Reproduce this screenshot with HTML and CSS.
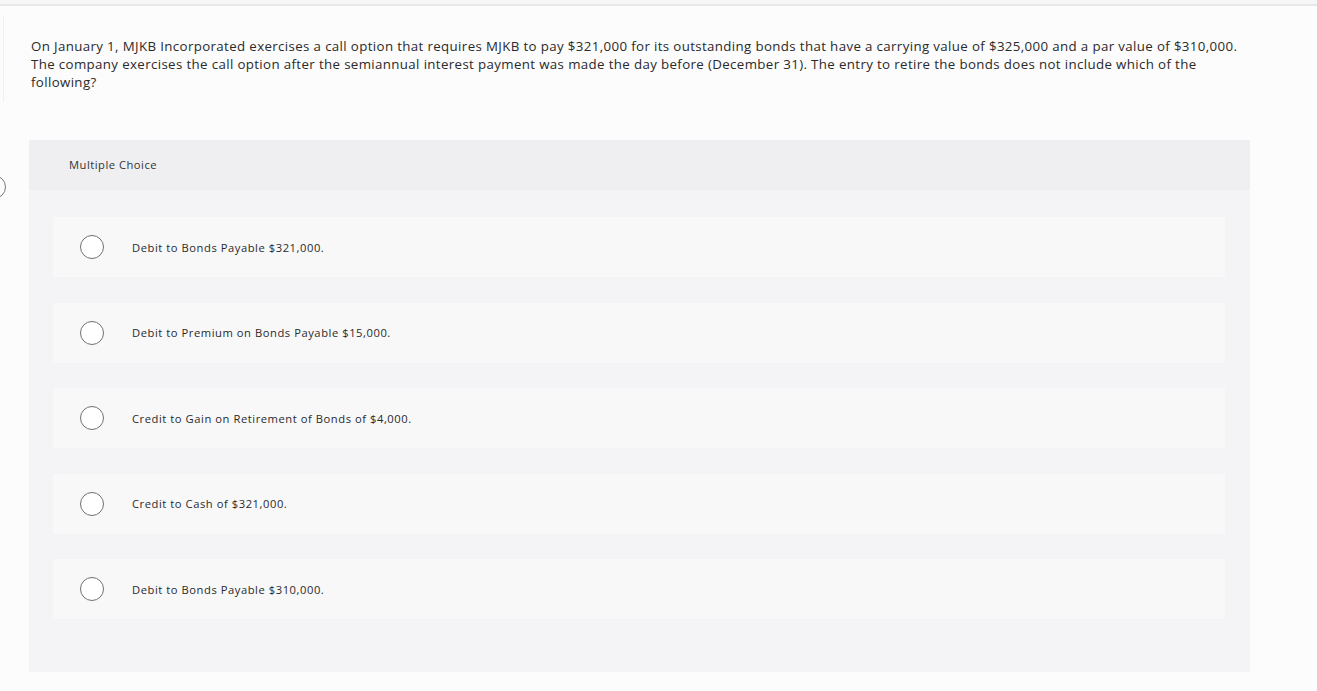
FILE: index.html
```html
<!DOCTYPE html>
<html>
<head>
<meta charset="utf-8">
<link rel="stylesheet" href="styles.css">
</head>
<body>
<div class="topbar"></div>
<div class="edge-radio"></div>
<main class="page">
  <section class="question">
    <p>On January 1, MJKB Incorporated exercises a call option that requires MJKB to pay $321,000 for its outstanding bonds that have a carrying value of $325,000 and a par value of $310,000. The company exercises the call option after the semiannual interest payment was made the day before (December 31). The entry to retire the bonds does not include which of the following?</p>
  </section>
  <section class="panel">
    <div class="panel-head">Multiple Choice</div>
    <div class="options">
      <div class="option"><span class="radio"></span><span class="label">Debit to Bonds Payable $321,000.</span></div>
      <div class="option"><span class="radio"></span><span class="label">Debit to Premium on Bonds Payable $15,000.</span></div>
      <div class="option"><span class="radio"></span><span class="label">Credit to Gain on Retirement of Bonds of $4,000.</span></div>
      <div class="option"><span class="radio"></span><span class="label">Credit to Cash of $321,000.</span></div>
      <div class="option"><span class="radio"></span><span class="label">Debit to Bonds Payable $310,000.</span></div>
    </div>
  </section>
</main>
</body>
</html>
```
FILE: styles.css
```css
html, body {
  margin: 0;
  padding: 0;
  background: #fcfcfd;
  font-family: "Open Sans", "Liberation Sans", sans-serif;
  color: #2b2b2b;
}
body {
  width: 1317px;
  height: 691px;
  overflow: hidden;
  position: relative;
}
.topbar {
  height: 4px;
  background: #f6f6f6;
  border-bottom: 2px solid #e8e8e8;
}
.edge-radio {
  position: absolute;
  left: -18px;
  top: 175px;
  width: 22px;
  height: 22px;
  border: 1px solid #777;
  border-radius: 50%;
}
.page {
  padding: 11px 0 0 3px;
}
.question {
  border-left: 1px solid #f0f0f2;
  padding: 20px 0 0 27px;
  height: 85px;
  box-sizing: border-box;
}
.question p {
  margin: 0;
  width: 1222px;
  font-size: 13.3px;
  line-height: 18px;
  letter-spacing: 0.36px;
  color: #2a2a2a;
}
.panel {
  margin: 38px 0 0 26px;
  width: 1221px;
  height: 532px;
  background: #f4f4f6;
}
.panel-head {
  height: 50px;
  background: #efeff1;
  padding-left: 40px;
  font-size: 11.2px;
  line-height: 50px;
  color: #333;
  letter-spacing: 0.5px;
}
.options {
  display: flex;
  flex-direction: column;
  gap: 25.5px;
  padding: 27px 0 0 24px;
}
.option {
  width: 1172px;
  height: 60px;
  background: #f8f8f9;
  display: flex;
  align-items: center;
  padding-left: 27px;
  box-sizing: border-box;
}
.radio {
  width: 22px;
  height: 22px;
  border: 1.2px solid #707070;
  border-radius: 50%;
  background: #fff;
  flex: none;
}
.label {
  margin-left: 28px;
  font-size: 11.2px;
  color: #2a2a2a;
  letter-spacing: 0.55px;
}
```
